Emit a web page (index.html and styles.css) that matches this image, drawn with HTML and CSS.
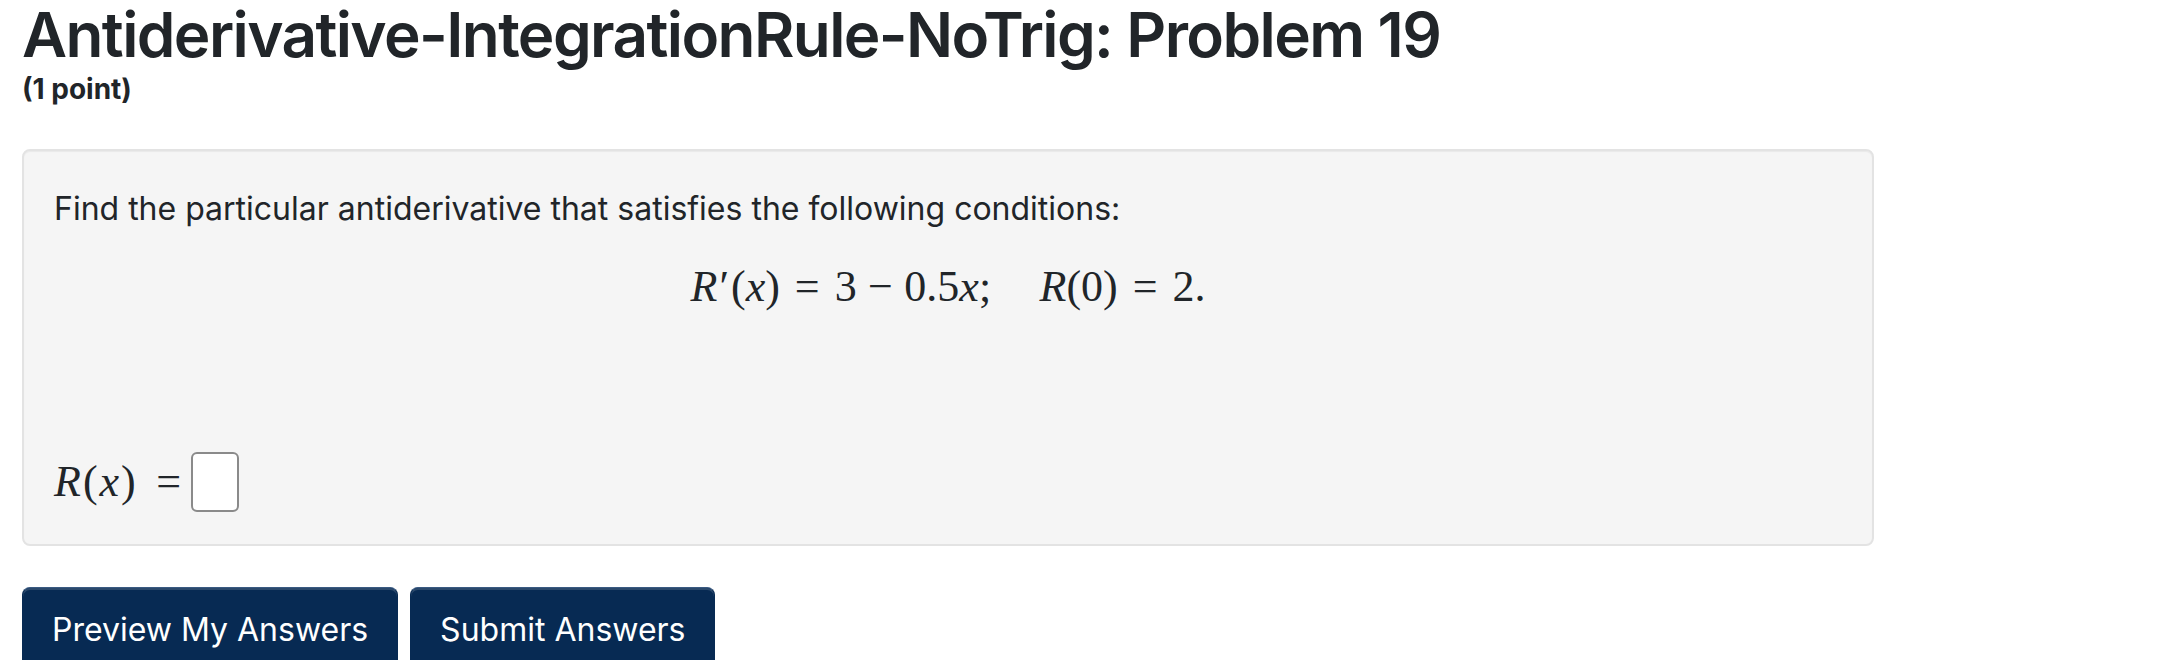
FILE: index.html
```html
<!DOCTYPE html>
<html lang="en">
<head>
<meta charset="utf-8">
<title>Problem 19</title>
<link rel="stylesheet" href="styles.css">
</head>
<body>
<div class="page">
  <h1 class="title">Antiderivative-IntegrationRule-NoTrig: Problem 19</h1>
  <div class="points">(1 point)</div>
  <div class="well">
    <p class="prompt">Find the particular antiderivative that satisfies the following conditions:</p>
    <div class="display-math">
      <span class="mi">R</span><span class="prime">&#8242;</span><span class="mo">(</span><span class="mi">x</span><span class="mo">)</span><span class="rel">=</span><span class="mn">3</span><span class="bin">&minus;</span><span class="mn">0.5</span><span class="mi">x</span><span class="mo">;</span><span class="quad"></span><span class="mi">R</span><span class="mo">(</span><span class="mn">0</span><span class="mo">)</span><span class="rel">=</span><span class="mn">2.</span>
    </div>
    <div class="answer-row">
      <span class="inline-math"><span class="mi">R</span><span class="mo paren">(</span><span class="mi">x</span><span class="mo paren">)</span><span class="rel rel-tight">=</span></span>
      <input class="answer" type="text" aria-label="answer">
    </div>
  </div>
  <div class="buttons">
    <button class="btn" type="button">Preview My Answers</button>
    <button class="btn" type="button">Submit Answers</button>
  </div>
</div>
</body>
</html>
```
FILE: styles.css
```css
html, body {
  margin: 0;
  padding: 0;
  background: #ffffff;
}
body {
  font-family: Inter, "Noto Sans", "Liberation Sans", sans-serif;
  color: #212529;
}
.page {
  width: 1852px;
  padding: 0 0 0 22px;
}
.title {
  margin: 0;
  padding-top: 1px;
  font-size: 62px;
  line-height: 1.1;
  font-weight: 600;
  letter-spacing: -1.6px;
}
.points {
  margin-top: 4px;
  font-size: 28px;
  font-weight: 700;
  line-height: 1.2;
}
.well {
  margin-top: 42px;
  background: #f5f5f5;
  border: 2px solid #e3e3e3;
  border-radius: 8px;
  padding: 34px 30px 32px 30px;
  box-shadow: inset 0 1px 1px rgba(0,0,0,0.05);
}
.prompt {
  margin: 0;
  font-size: 32px;
  line-height: 1.5;
}
.display-math {
  margin-top: 28px;
  text-align: center;
  font-family: "Liberation Serif", "DejaVu Serif", serif;
  font-size: 44px;
  line-height: 1.2;
}
.mi { font-style: italic; }
.prime { font-style: normal; margin-left: 2px; margin-right: 2px; }
.mo, .mn { font-style: normal; }
.rel { margin: 0 0.34em; }
.bin { margin: 0 0.26em; }
.quad { display: inline-block; width: 1.1em; }
.answer-row {
  margin-top: 138px;
  display: flex;
  align-items: center;
  gap: 10px;
}
.inline-math {
  font-family: "Liberation Serif", "DejaVu Serif", serif;
  font-size: 44px;
}
.paren { margin: 0 2px; }
.rel-tight { margin-left: 0.42em; margin-right: 0; }
.answer {
  width: 48px;
  height: 60px;
  box-sizing: border-box;
  border: 2px solid #8a8a8a;
  border-radius: 6px;
  background: #fff;
  margin: 0;
}
.buttons {
  margin-top: 41px;
  display: flex;
  gap: 12px;
}
.btn {
  background: #072a53;
  color: #fff;
  border: 1px solid #072a53;
  border-top-color: #3a5a82;
  border-radius: 8px;
  font-family: Inter, "Noto Sans", "Liberation Sans", sans-serif;
  font-size: 32px;
  padding: 18px 29px;
  line-height: 1.5;
  box-shadow: inset 0 2px 0 rgba(255,255,255,0.15);
}
```
